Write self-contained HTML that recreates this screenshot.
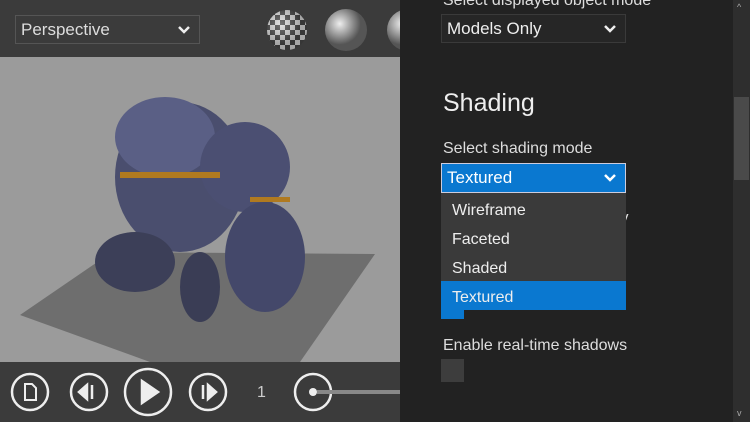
<!DOCTYPE html>
<html><head><style>
body{margin:0;width:750px;height:422px;overflow:hidden;background:#222;font-family:"Liberation Sans",sans-serif;position:relative}
.a{position:absolute}
.chev{position:absolute;right:8px;top:9px}
</style></head><body>
<div class="a" style="left:0;top:0;width:400px;height:57px;background:#3b3b3b"></div>
<div class="a" style="left:15px;top:15px;width:185px;height:29px;border:1px solid #555;box-sizing:border-box;color:#ddd;font-size:17px;line-height:27px;padding-left:5px">Perspective<svg class="chev" width="14" height="10"><path d="M2 2l5 5 5-5" fill="none" stroke="#eee" stroke-width="2.5"/></svg></div>
<svg class="a" style="left:0;top:0" width="400" height="57">
<defs><radialGradient id="s" cx="35%" cy="35%"><stop offset="0" stop-color="#eee"/><stop offset="1" stop-color="#555"/></radialGradient>
<pattern id="c" width="10" height="10" patternUnits="userSpaceOnUse"><rect width="10" height="10" fill="#ddd"/><rect width="5" height="5" fill="#222"/><rect x="5" y="5" width="5" height="5" fill="#222"/></pattern></defs>
<circle cx="287" cy="30" r="20" fill="url(#c)"/><circle cx="287" cy="30" r="20" fill="url(#s)" opacity=".4"/>
<circle cx="346" cy="30" r="21" fill="url(#s)"/>
<circle cx="408" cy="30" r="21" fill="url(#s)"/>
</svg>
<div class="a" style="left:0;top:57px;width:400px;height:305px;background:#9b9b9b"></div>
<svg class="a" style="left:0;top:57px" width="400" height="305">
<polygon points="20,258 112,195 375,197 300,305 150,305" fill="#6e6e6e"/>
<ellipse cx="180" cy="120" rx="65" ry="75" fill="#4a4e6e"/>
<ellipse cx="165" cy="80" rx="50" ry="40" fill="#5a5f85"/>
<ellipse cx="245" cy="110" rx="45" ry="45" fill="#4b4f72"/>
<ellipse cx="265" cy="200" rx="40" ry="55" fill="#44486a"/>
<ellipse cx="135" cy="205" rx="40" ry="30" fill="#3c3f58"/>
<ellipse cx="200" cy="230" rx="20" ry="35" fill="#3a3d55"/>
<rect x="120" y="115" width="100" height="6" fill="#b07a20"/>
<rect x="250" y="140" width="40" height="5" fill="#b07a20"/>
</svg>
<div class="a" style="left:0;top:362px;width:400px;height:60px;background:#3b3b3b"></div>
<svg class="a" style="left:0;top:362px" width="400" height="60" fill="none" stroke="#eee" stroke-width="2.5">
<circle cx="30" cy="30" r="18"/><path d="M25 22h7l4 4v12h-11z" stroke-width="2"/>
<circle cx="89" cy="30" r="18"/><path d="M92 23v14M87 23l-8 7 8 7z" fill="#eee"/>
<circle cx="148" cy="30" r="23"/><path d="M142 19l16 11-16 11z" fill="#eee"/>
<circle cx="208" cy="30" r="18"/><path d="M203 23v14M208 23l8 7-8 7z" fill="#eee"/>
<circle cx="313" cy="30" r="18"/><circle cx="313" cy="30" r="4" fill="#eee" stroke="none"/>
<line x1="317" y1="30" x2="400" y2="30" stroke="#888" stroke-width="4"/>
</svg>
<div class="a" style="left:257px;top:384px;color:#ccc;font-size:16px">1</div>
<div class="a" style="left:443px;top:-8px;color:#ddd;font-size:16px">Select displayed object mode</div>
<div class="a" style="left:441px;top:14px;width:185px;height:29px;border:1px solid #3a3a3a;box-sizing:border-box;background:#262626;color:#eee;font-size:17px;line-height:27px;padding-left:5px">Models Only<svg class="chev" width="14" height="10"><path d="M2 2l5 5 5-5" fill="none" stroke="#eee" stroke-width="2.5"/></svg></div>
<div class="a" style="left:443px;top:89px;color:#eee;font-size:25px">Shading</div>
<div class="a" style="left:443px;top:140px;color:#ddd;font-size:16px">Select shading mode</div>
<div class="a" style="left:441px;top:163px;width:185px;height:30px;border:1px solid #ccd;box-sizing:border-box;background:#0a78d0;color:#fff;font-size:17px;line-height:28px;padding-left:5px">Textured<svg class="chev" width="14" height="10"><path d="M2 2l5 5 5-5" fill="none" stroke="#fff" stroke-width="2.5"/></svg></div>
<div class="a" style="left:620px;top:208px;color:#ddd;font-size:17px">y</div>
<div class="a" style="left:441px;top:193px;width:185px;height:117px;background:#3a3a3a;color:#eee;font-size:16px">
<div style="height:29px;line-height:36px;padding-left:11px">Wireframe</div>
<div style="height:29px;line-height:36px;padding-left:11px">Faceted</div>
<div style="height:30px;line-height:36px;padding-left:11px">Shaded</div>
<div style="height:29px;line-height:33px;padding-left:11px;background:#0a78d0">Textured</div></div>
<div class="a" style="left:441px;top:310px;width:23px;height:9px;background:#0a78d0"></div>
<div class="a" style="left:443px;top:337px;color:#ddd;font-size:16px">Enable real-time shadows</div>
<div class="a" style="left:441px;top:359px;width:23px;height:23px;background:#3d3d3d"></div>
<div class="a" style="left:733px;top:0;width:17px;height:422px;background:#2e2e2e"></div>
<div class="a" style="left:734px;top:97px;width:15px;height:83px;background:#4a4a4a"></div>
<div class="a" style="left:737px;top:2px;color:#aaa;font-size:9px">^</div>
<div class="a" style="left:737px;top:408px;color:#aaa;font-size:9px">v</div>
</body></html>
